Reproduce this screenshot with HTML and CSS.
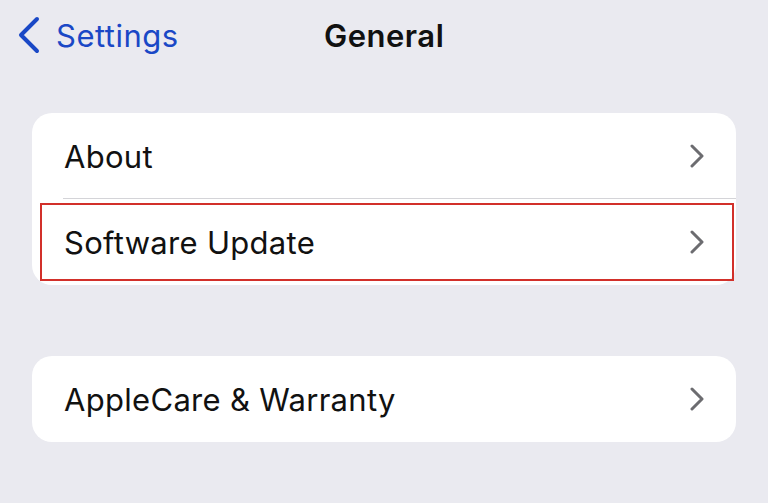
FILE: index.html
```html
<!DOCTYPE html>
<html lang="en">
<head>
    <meta charset="UTF-8">
    <title>General</title>
    <link rel="stylesheet" href="styles.css">
</head>
<body>
    <header class="nav">
        <a class="back" href="#">
            <svg class="back-icon" width="26" height="38" viewBox="0 0 26 38">
                <path d="M21 3 L5 19 L21 35" fill="none" stroke="currentColor" stroke-width="4" stroke-linecap="round" stroke-linejoin="round"/>
            </svg>
            <span>Settings</span>
        </a>
        <h1>General</h1>
    </header>

    <div class="group">
        <div class="row">
            <span class="label">About</span>
            <svg class="chevron" width="16" height="24" viewBox="0 0 16 24"><path d="M3 2 L13 12 L3 22" fill="none" stroke="currentColor" stroke-width="3" stroke-linecap="round" stroke-linejoin="round"/></svg>
        </div>
        <div class="row highlighted">
            <span class="label">Software Update</span>
            <svg class="chevron" width="16" height="24" viewBox="0 0 16 24"><path d="M3 2 L13 12 L3 22" fill="none" stroke="currentColor" stroke-width="3" stroke-linecap="round" stroke-linejoin="round"/></svg>
        </div>
    </div>

    <div class="group">
        <div class="row">
            <span class="label">AppleCare &amp; Warranty</span>
            <svg class="chevron" width="16" height="24" viewBox="0 0 16 24"><path d="M3 2 L13 12 L3 22" fill="none" stroke="currentColor" stroke-width="3" stroke-linecap="round" stroke-linejoin="round"/></svg>
        </div>
    </div>
</body>
</html>
```

FILE: styles.css
```css
:root {
    --bg: #eaeaf0;
    --card: #ffffff;
    --blue: #1a48c6;
    --text: #111111;
    --chevron: #6c6c70;
    --separator: #d4d4d8;
}
body {
    margin: 0;
    background: var(--bg);
    font-family: Inter, "Noto Sans", sans-serif;
    color: var(--text);
    height: 503px;
    overflow: hidden;
}
.nav {
    position: relative;
    height: 72px;
    display: flex;
    align-items: center;
}
.back {
    display: flex;
    align-items: center;
    gap: 14px;
    padding-left: 16px;
    padding-bottom: 2px;
    color: var(--blue);
    text-decoration: none;
    font-size: 31px;
    letter-spacing: 0.5px;
}
.back-icon {
    display: block;
}
.nav h1 {
    position: absolute;
    left: 324px;
    top: 0;
    margin: 0;
    line-height: 72px;
    font-size: 31px;
    font-weight: 600;
    letter-spacing: 0.5px;
}
.group {
    margin: 41px 32px 0;
    background: var(--card);
    border-radius: 20px;
}
.group + .group {
    margin-top: 71px;
}
.row {
    position: relative;
    display: flex;
    align-items: center;
    justify-content: space-between;
    height: 86px;
    padding: 0 31px 0 32px;
}
.row + .row::before {
    content: "";
    position: absolute;
    left: 31px;
    right: 0;
    top: -1px;
    height: 1px;
    background: var(--separator);
}
.label {
    font-size: 31px;
    letter-spacing: 0.3px;
}
.chevron {
    color: var(--chevron);
}
.highlighted::after {
    content: "";
    position: absolute;
    left: 8px;
    right: 2px;
    top: 4px;
    bottom: 4px;
    border: 2px solid #d2302a;
}
```
